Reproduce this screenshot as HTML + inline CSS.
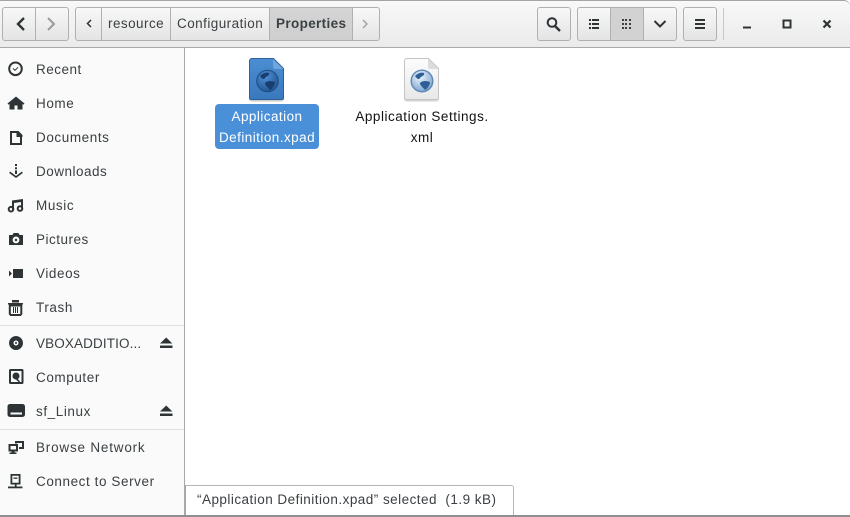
<!DOCTYPE html>
<html><head><meta charset="utf-8">
<style>
html,body{margin:0;padding:0}
body{width:850px;height:517px;overflow:hidden;background:#fff;position:relative;font-family:"Liberation Sans",sans-serif;font-size:13.5px;color:#2e3436}
.a{position:absolute}
#tb{left:0;top:0;width:850px;background:linear-gradient(#f8f8f8,#ebebeb);border-top:1px solid #a4a4a4;border-bottom:1px solid #a9a9a9;box-sizing:content-box;height:46px;border-top-right-radius:6px}
.btn{position:absolute;top:7px;box-sizing:border-box;height:34px;border:1px solid #b0b0b0;border-radius:3px;background:linear-gradient(#f8f8f8,#e4e4e4)}
.d{position:absolute;top:7px;width:1px;height:34px;background:#b0b0b0}
.t{position:absolute;white-space:nowrap;letter-spacing:.45px}
#sb{left:0;top:48px;width:184px;height:467px;background:#fafafa;border-right:1px solid #a9a9a9}
.s{position:absolute;left:36px;white-space:nowrap;letter-spacing:.58px;color:#3b4043;line-height:16px}
.hr{position:absolute;left:0;width:184px;height:1px;background:#dfdfdf}
svg{position:absolute;overflow:visible}
</style></head><body>
<div id="tb" class="a"></div>

<div class="btn" style="left:2px;width:67px"></div><div class="d" style="left:35px"></div>
<svg style="left:0;top:0" width="850" height="48" fill="none">
<path d="M24 18l-6 6 6 6" stroke="#2e3436" stroke-width="2.4"/>
<path d="M48 18l6 6-6 6" stroke="#9a9c9c" stroke-width="2"/>
</svg>

<div class="btn" style="left:75px;width:305px"></div>
<div class="a" style="left:270px;top:8px;width:82px;height:32px;background:linear-gradient(#d4d4d4,#cfcfcf)"></div>
<div class="d" style="left:101px"></div><div class="d" style="left:170px"></div><div class="d" style="left:269px"></div><div class="d" style="left:352px"></div>
<svg style="left:0;top:0" width="850" height="48" fill="none">
<path d="M91 20l-3.500 3.500 3.500 3.500" stroke="#2e3436" stroke-width="1.500"/>
<path d="M363 20l4 4-4 4" stroke="#9a9c9c" stroke-width="1.300"/>
</svg>
<div class="t" style="left:108px;top:16px;color:#3b4043">resource</div>
<div class="t" style="left:177px;top:16px;color:#3b4043">Configuration</div>
<div class="t" style="left:276px;top:16px;font-weight:bold;color:#3b4043;letter-spacing:.36px">Properties</div>

<div class="btn" style="left:537px;width:34px"></div>
<svg style="left:0;top:0" width="850" height="48" fill="none">
<circle cx="552" cy="22.500" r="4.300" stroke="#2e3436" stroke-width="2"/>
<path d="M555 26l5 5" stroke="#2e3436" stroke-width="2.400"/>
</svg>

<div class="btn" style="left:577px;width:100px"></div>
<div class="a" style="left:611px;top:8px;width:32px;height:32px;background:#d2d2d2"></div>
<div class="d" style="left:610px"></div><div class="d" style="left:643px"></div>
<svg style="left:0;top:0" width="850" height="48" fill="#2e3436">
<rect x="589" y="19" width="2" height="2"/><rect x="589" y="23" width="2" height="2"/><rect x="589" y="27" width="2" height="2"/>
<rect x="592" y="19" width="7" height="2"/><rect x="592" y="23" width="7" height="2"/><rect x="592" y="27" width="7" height="2"/>
<g fill="#3b4043">
<rect x="622" y="19" width="2" height="2"/><rect x="625" y="19" width="2" height="2"/><rect x="629" y="19" width="2" height="2"/>
<rect x="622" y="23" width="2" height="2"/><rect x="625" y="23" width="2" height="2"/><rect x="629" y="23" width="2" height="2"/>
<rect x="622" y="27" width="2" height="2"/><rect x="625" y="27" width="2" height="2"/><rect x="629" y="27" width="2" height="2"/>
</g>
<path d="M654.500 21l5.500 5.500 5.500-5.500" fill="none" stroke="#2e3436" stroke-width="2"/>
</svg>

<div class="btn" style="left:683px;width:34px"></div>
<svg style="left:0;top:0" width="850" height="48" fill="#2e3436">
<rect x="695" y="19" width="10" height="2"/><rect x="695" y="23" width="10" height="2"/><rect x="695" y="27" width="10" height="2"/>
<rect x="723" y="8" width="1" height="32" fill="#c8c8c8"/>
<rect x="743" y="26.500" width="8" height="2"/>
<path d="M783.500 20.500h7v7h-7z" fill="none" stroke="#2e3436" stroke-width="2"/>
<path d="M823.500 20.500l7 7M830.500 20.500l-7 7" fill="none" stroke="#2e3436" stroke-width="2.200"/>
</svg>

<div id="sb" class="a"></div>
<div class="s" style="top:62px;letter-spacing:.5px">Recent</div>
<div class="s" style="top:96px">Home</div>
<div class="s" style="top:130px">Documents</div>
<div class="s" style="top:164px;letter-spacing:.5px">Downloads</div>
<div class="s" style="top:198px">Music</div>
<div class="s" style="top:232px;letter-spacing:.5px">Pictures</div>
<div class="s" style="top:266px">Videos</div>
<div class="s" style="top:300px">Trash</div>
<div class="hr" style="top:325px"></div>
<div class="s" style="top:336px;letter-spacing:.12px">VBOXADDITIO...</div>
<div class="s" style="top:370px">Computer</div>
<div class="s" style="top:404px">sf_Linux</div>
<div class="hr" style="top:429px"></div>
<div class="s" style="top:440px;letter-spacing:.8px">Browse Network</div>
<div class="s" style="top:474px">Connect to Server</div>

<svg style="left:0;top:0" width="185" height="517" fill="#2e3436">
<circle cx="15.500" cy="68.800" r="6.300" fill="none" stroke="#2e3436" stroke-width="2"/>
<path d="M13 68.500l2 1.800 3-3" fill="none" stroke="#2e3436"/>
<path fill-rule="evenodd" d="M7.500 103.500l8.500-7 8.500 7-1 1.200-1-.8v5.600h-5v-4h-3v4h-5v-5.600l-1 .8z"/>
<path d="M11 132h6.500l3.500 3.500v8.500h-10z" fill="none" stroke="#2e3436" stroke-width="2"/>
<path d="M16.500 131h2l4 4v2h-6z"/>
<path d="M15 164h2v2h-2zM15 167.200h2v2h-2zM15 170.400h2v3.600h-2z"/>
<path d="M10 171.500l6 4.500 6-4.500 .8 1.500-6.800 5-6.800-5z"/>
<path d="M12 200.500l11-1.500v9.500h-2v-6.500l-7 1v7h-2z"/>
<circle cx="11" cy="209.200" r="2.300" fill="none" stroke="#2e3436" stroke-width="2"/>
<circle cx="20" cy="208.500" r="2.300" fill="none" stroke="#2e3436" stroke-width="2"/>
<path fill-rule="evenodd" d="M9 235h3.500l1-2h5l1 2h3.500v10h-14zM16 236.500a3.400 3.400 0 1 0 .01 0zM16 238.800a1.200 1.200 0 1 1-.01 0z"/>
<path d="M13 269h10v9h-10zM9 270.500l3 3-3 3z"/>
<path d="M8 303h15v1.500h-15zM12 300h7v2.500h-7z"/>
<path d="M9.800 305.500h11.500v8.500l-1 1h-9.500l-1-1z" fill="none" stroke="#2e3436" stroke-width="2"/>
<path d="M13 307h1v6h-1zM15 307h1v6h-1zM17 307h1v6h-1z"/>
<path fill-rule="evenodd" d="M16 336a7 7 0 1 0 .01 0zM16 340.500a2.500 2.500 0 1 1-.01 0z"/>
<circle cx="16" cy="343" r="1"/>
<path fill-rule="evenodd" d="M10.500 369h11.500a1.500 1.500 0 0 1 1.500 1.500v12a1.500 1.500 0 0 1-1.500 1.500h-11.500a1.500 1.500 0 0 1-1.500-1.500v-12a1.500 1.500 0 0 1 1.500-1.500zM11 371v11h10.500v-11z"/>
<circle cx="16" cy="376" r="3.500"/>
<path d="M17 378l3 3.500-1 1-3-3z"/>
<path fill-rule="evenodd" d="M10 404h12.500a2.500 2.500 0 0 1 2.500 2.500v8a2.500 2.500 0 0 1-2.500 2.500h-12.500a2.500 2.500 0 0 1-2.500-2.500v-8a2.500 2.500 0 0 1 2.500-2.500zM10.500 412.500v2h11.500v-2z"/>
<path d="M8.500 444h9.500v7.500h-3.500v1h2v1.500h-7v-1.500h2v-1h-3zM10.500 446v3.500h5.500v-3.500z" fill-rule="evenodd"/>
<path d="M15 441h9v8h-5v-2h3v-4h-5v.5h-2z"/>
<path fill-rule="evenodd" d="M10.500 474h10v10.500h-10zM12.300 475.800v6.900h6.400v-6.900z"/>
<rect x="13.500" y="477.500" width="4" height="1.300"/>
<rect x="14.800" y="484" width="1.800" height="3"/>
<rect x="8" y="486.500" width="14.500" height="1.800"/>
<path d="M160 343.500l6.200-6 6.200 6z"/><rect x="160" y="345.500" width="12.500" height="2.500"/>
<path d="M160 411.500l6.200-6 6.200 6z"/><rect x="160" y="413.500" width="12.500" height="2.500"/>
</svg>

<!-- selected file -->
<svg style="left:249px;top:58px" width="36" height="43">
<defs>
<linearGradient id="b" x1="0" y1="0" x2="0" y2="1"><stop offset="0" stop-color="#4b8ed2"/><stop offset="1" stop-color="#3a78bd"/></linearGradient>
<radialGradient id="g1" cx=".4" cy=".3" r=".8"><stop offset="0" stop-color="#4f90d6"/><stop offset="1" stop-color="#1d4f8a"/></radialGradient>
<radialGradient id="g2" cx=".4" cy=".3" r=".8"><stop offset="0" stop-color="#eef4fb"/><stop offset="1" stop-color="#6e9bcb"/></radialGradient>
<filter id="sh" x="-20%" y="-20%" width="140%" height="140%"><feGaussianBlur stdDeviation="1"/></filter>
</defs>
<rect x="1" y="39" width="33" height="4" fill="#000" opacity=".3" filter="url(#sh)"/>
<path d="M.5 3a2.500 2.500 0 0 1 2.500-2.500h21.500l10 10v29.500a1.500 1.500 0 0 1-1.500 1.500h-31a1.500 1.500 0 0 1-1.500-1.500z" fill="url(#b)" stroke="#2f6199"/>
<path d="M24 1v8a2 2 0 0 0 2 2h8.500z" fill="#6ea5dc"/>
<circle cx="18.500" cy="23" r="10.800" fill="url(#g1)" stroke="#1f4d82"/>
<path d="M11 18c3-3 6-4 9-3 1 3-3 3-4 5s-3 1-5-2zM16 25c3-3 7-2 10-1 0 3-3 7-5 8-1-2-5-4-5-7z" fill="#173f6f"/>
</svg>
<div class="a" style="left:215px;top:104px;width:104px;height:45px;background:#4a90d9;border-radius:4px"></div>
<div class="a" style="left:215px;top:106px;width:104px;text-align:center;color:#fff;line-height:21px;letter-spacing:.45px">Application<br>Definition.xpad</div>

<!-- xml file -->
<svg style="left:404px;top:58px" width="36" height="43">
<defs><linearGradient id="w" x1="0" y1="0" x2="0" y2="1"><stop offset="0" stop-color="#fdfdfd"/><stop offset="1" stop-color="#e8e8e8"/></linearGradient></defs>
<rect x="1" y="39" width="33" height="4" fill="#000" opacity=".25" filter="url(#sh)"/>
<path d="M.5 3a2.500 2.500 0 0 1 2.500-2.500h21.500l10 10v29.500a1.500 1.500 0 0 1-1.500 1.500h-31a1.500 1.500 0 0 1-1.500-1.500z" fill="url(#w)" stroke="#c4c4c4"/>
<path d="M24 1v8a2 2 0 0 0 2 2h8.500z" fill="#dcdcdc"/>
<circle cx="18" cy="23" r="10.800" fill="url(#g2)" stroke="#5e88b5" stroke-width="1.400"/>
<path d="M11 18c3-3 6-4 9-3 1 3-3 3-4 5s-3 1-5-2zM16 25c3-3 7-2 10-1 0 3-3 7-5 8-1-2-5-4-5-7z" fill="#2d5f96"/>
</svg>
<div class="a" style="left:345px;top:106px;width:154px;text-align:center;color:#101214;line-height:21px;letter-spacing:.52px">Application Settings.<br>xml</div>

<!-- status -->
<div class="a" style="left:185px;top:485px;width:329px;height:30px;box-sizing:border-box;background:#fff;border:1px solid #b5b5b5;border-bottom:none;border-left:none;border-radius:0 3px 0 0"></div>
<div class="a" style="left:185px;top:485px;width:1px;height:30px;background:#a9a9a9"></div>
<div class="t" style="left:197px;top:492px;color:#3b4043;letter-spacing:.47px">“Application Definition.xpad” selected&nbsp; (1.9 kB)</div>
<div class="a" style="left:0;top:515px;width:850px;height:2px;background:#8f8f8f"></div>
</body></html>
